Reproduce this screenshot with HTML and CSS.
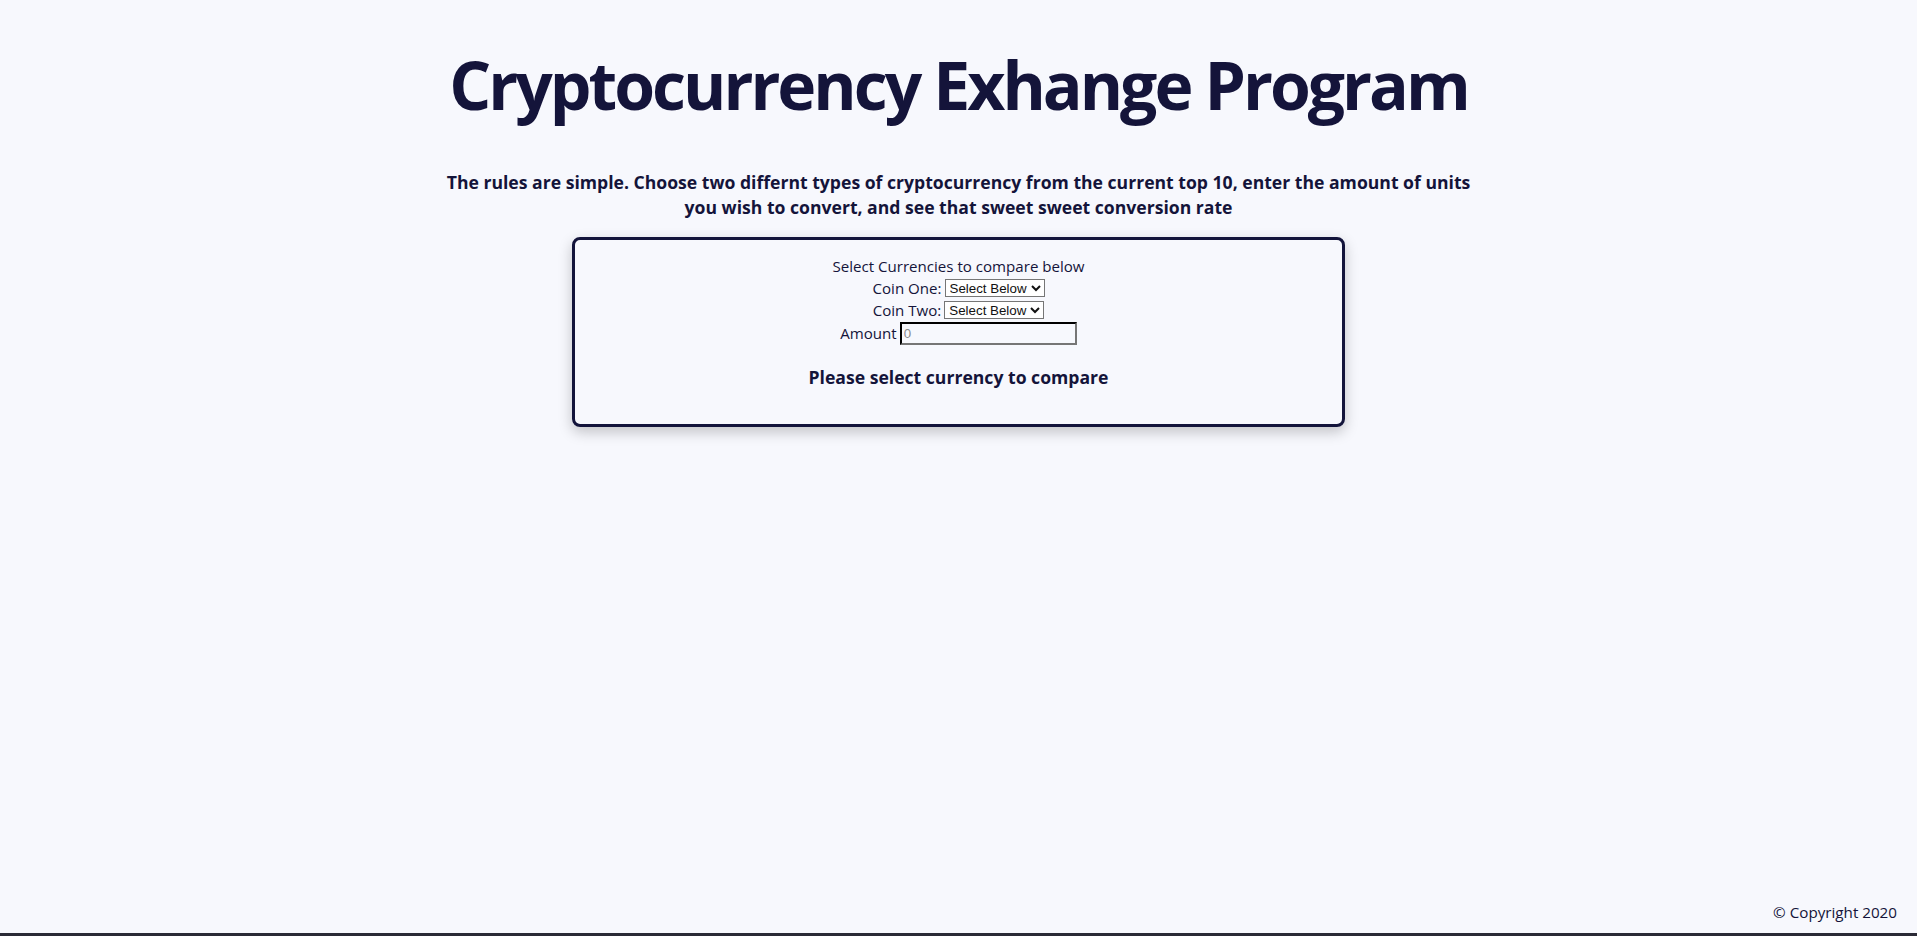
FILE: index.html
```html
<!DOCTYPE html>
<html lang="en">
<head>
<meta charset="utf-8">
<title>Cryptocurrency Exhange Program</title>
<link rel="stylesheet" href="styles.css">
</head>
<body>
<div class="page">
  <header class="intro">
    <h1 class="title">Cryptocurrency Exhange Program</h1>
    <h3 class="rules">The rules are simple. Choose two differnt types of cryptocurrency from the current top 10, enter the amount of units you wish to convert, and see that sweet sweet conversion rate</h3>
  </header>
  <main class="card">
    <div class="form">
      <div class="row">Select Currencies to compare below</div>
      <div class="row">
        <label for="c1">Coin One:</label>
        <select id="c1" class="coin"><option>Select Below</option></select>
      </div>
      <div class="row">
        <label for="c2">Coin Two:</label>
        <select id="c2" class="coin"><option>Select Below</option></select>
      </div>
      <div class="row">
        <label for="amt">Amount</label>
        <input id="amt" class="amount" type="text" placeholder="0">
      </div>
    </div>
    <h3 class="result">Please select currency to compare</h3>
  </main>
  <footer class="footer">© Copyright 2020</footer>
</div>
</body>
</html>
```

FILE: styles.css
```css
html, body {
  margin: 0;
  padding: 0;
  background: #f7f8fd;
}
body {
  font-family: "Open Sans", "Noto Sans", sans-serif;
  color: #14143a;
}
.page {
  min-height: 100vh;
  box-sizing: border-box;
  display: flex;
  flex-direction: column;
  align-items: center;
  border-bottom: 3px solid #2a2a36;
}
.intro {
  display: flex;
  flex-direction: column;
  align-items: center;
  text-align: center;
}
.title {
  margin: 39px 0 0;
  font-size: 66px;
  line-height: 90px;
  font-weight: 700;
  letter-spacing: -3px;
  white-space: nowrap;
}
.rules {
  width: 1040px;
  margin: 41px 0 0;
  font-size: 17.6px;
  line-height: 25px;
  font-weight: 700;
  letter-spacing: 0;
}
.card {
  margin-top: 17px;
  width: 40%;
  border: 3px solid #13143b;
  border-radius: 8px;
  box-shadow: 0 5px 14px rgba(0, 0, 0, 0.22);
  padding: 16px 0 0;
  text-align: center;
}
.form {
  display: flex;
  flex-direction: column;
  align-items: center;
  font-size: 15.1px;
  line-height: 21px;
}
.row {
  display: flex;
  align-items: center;
  gap: 3px;
  height: 22px;
}
.row:first-child {
  height: 21px;
}
.row:last-child {
  height: 25px;
}
.coin {
  font-family: "Liberation Sans", Arial, sans-serif;
  font-size: 13.33px;
  height: 18px;
  padding: 0;
  border: 1px solid #767676;
  border-radius: 0;
  background: #fff;
  color: #111;
}
.amount {
  box-sizing: border-box;
  width: 177px;
  height: 23px;
  font-family: "Liberation Sans", Arial, sans-serif;
  font-size: 13.33px;
  padding: 1px 2px;
  border: 2px inset #767676;
  border-top-color: #333;
  border-left-color: #333;
  background: #f7f8fd;
}
.amount::placeholder {
  color: #8a8a8a;
}
.result {
  margin: 19px 0 34px;
  font-size: 17.6px;
  line-height: 25px;
  font-weight: 700;
  letter-spacing: 0;
}
.footer {
  margin-top: auto;
  align-self: flex-end;
  padding: 0 20px 11px 0;
  font-size: 15.2px;
  line-height: 20px;
}
```
